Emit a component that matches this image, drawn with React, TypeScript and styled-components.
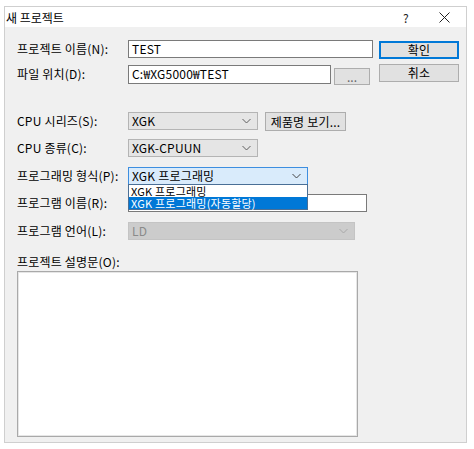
import React from "react";
import styled, { createGlobalStyle } from "styled-components";

const GlobalStyle = createGlobalStyle`
  body {
    margin: 0;
    background: #ffffff;
    font-family: "Noto Sans CJK KR", "Noto Sans", sans-serif;
    font-size: 12px;
    color: #000;
  }
`;

const Window = styled.div`
  margin: 6px 0 0 4px;
  width: 463px;
  height: 437px;
  box-sizing: border-box;
  border: 1px solid #cfcfcf;
  background: #f0f0f0;
  display: flex;
  flex-direction: column;
`;

const TitleBar = styled.div`
  height: 20px;
  background: #fff;
  display: flex;
  align-items: center;
  padding-left: 1px;
  font-size: 12px;
`;

const Title = styled.span`
  flex: 1;
`;

const HelpMark = styled.span`
  width: 14px;
  margin-right: 22px;
  font-size: 12px;
  color: #222;
`;

const CloseBox = styled.span`
  display: flex;
  width: 12px;
  margin-right: 15px;
`;

const Body = styled.div`
  flex: 1;
  padding: 13px 7px 0 12px;
  display: flex;
  flex-direction: column;
  letter-spacing: 0.2px;
`;

const TopSection = styled.div`
  display: flex;
  gap: 6px;
`;

const TopFields = styled.div`
  width: 356px;
  display: flex;
  flex-direction: column;
  gap: 7px;
`;

const ButtonColumn = styled.div`
  width: 80px;
  padding-top: 1px;
  display: flex;
  flex-direction: column;
  gap: 5px;
`;

const Row = styled.div<{ $gap?: number; $h?: number }>`
  position: relative;
  display: flex;
  align-items: flex-start;
  height: ${({ $h }) => $h ?? 18}px;
  margin-top: ${({ $gap }) => $gap ?? 0}px;
`;

const Label = styled.div`
  width: 111px;
  flex-shrink: 0;
  line-height: 18px;
  white-space: nowrap;
`;

const TextBox = styled.div<{ $w: number; $h?: number }>`
  width: ${({ $w }) => $w}px;
  height: ${({ $h }) => $h ?? 18}px;
  box-sizing: border-box;
  background: #fff;
  border: 1px solid #7a7a7a;
  padding-left: 3px;
  line-height: ${({ $h }) => ($h ?? 18) - 3}px;
  white-space: nowrap;
  overflow: hidden;
`;

const Button = styled.div<{ $w?: number; $h?: number; $default?: boolean; $mt?: number; $ml?: number }>`
  width: ${({ $w }) => ($w ? `${$w}px` : "100%")};
  height: ${({ $h }) => $h ?? 18}px;
  margin-top: ${({ $mt }) => $mt ?? 0}px;
  margin-left: ${({ $ml }) => $ml ?? 0}px;
  box-sizing: border-box;
  background: #e1e1e1;
  border: 1px solid ${({ $default }) => ($default ? "#0078d7" : "#adadad")};
  box-shadow: ${({ $default }) => ($default ? "inset 0 0 0 1px #0078d7" : "none")};
  display: flex;
  align-items: center;
  justify-content: center;
  font-size: 12px;
  line-height: 1;
  white-space: nowrap;
`;

const Ellipsis = styled.span`
  color: #666;
  letter-spacing: 0;
`;

type ComboTone = "normal" | "focus" | "disabled";

const ComboBox = styled.div<{ $w: number; $tone?: ComboTone }>`
  width: ${({ $w }) => $w}px;
  height: 18px;
  box-sizing: border-box;
  display: flex;
  align-items: center;
  padding: 0 6px 0 3px;
  background: ${({ $tone }) =>
    $tone === "focus" ? "#d9ebfb" : $tone === "disabled" ? "#cccccc" : "#e5e5e5"};
  border: 1px solid
    ${({ $tone }) =>
      $tone === "focus" ? "#3d8ee0" : $tone === "disabled" ? "#c4c4c4" : "#b4b4b4"};
  color: ${({ $tone }) => ($tone === "disabled" ? "#8a8a8a" : "#000")};
`;

const ComboText = styled.span`
  flex: 1;
  white-space: nowrap;
  line-height: 16px;
`;

const DropList = styled.div`
  position: absolute;
  top: 17px;
  left: 111px;
  width: 180px;
  box-sizing: border-box;
  border: 1px solid #4a6f96;
  background: #fff;
  z-index: 2;
`;

const DropItem = styled.div<{ $selected?: boolean }>`
  height: 12px;
  font-size: 11px;
  line-height: 12px;
  padding-left: 2px;
  white-space: nowrap;
  background: ${({ $selected }) => ($selected ? "#0078d7" : "#fff")};
  color: ${({ $selected }) => ($selected ? "#fff" : "#000")};
`;

const NoteLabel = styled.div`
  margin-top: 14px;
  line-height: 16px;
`;

const NoteArea = styled.div`
  margin-top: 1px;
  width: 341px;
  height: 166px;
  box-sizing: border-box;
  background: #fff;
  border: 1px solid #a9a9a9;
  box-shadow: inset 0 0 0 1px #e6e6e6;
`;

const Chevron: React.FC<{ color?: string }> = ({ color = "#5f5f5f" }) => (
  <svg width="9" height="6" viewBox="0 0 9 6">
    <polyline points="0.5,1 4.5,5 8.5,1" fill="none" stroke={color} strokeWidth="1" />
  </svg>
);

const App: React.FC = () => {
  return (
    <>
      <GlobalStyle />
      <Window>
        <TitleBar>
          <Title>새 프로젝트</Title>
          <HelpMark>?</HelpMark>
          <CloseBox>
            <svg width="11" height="11" viewBox="0 0 11 11">
              <line x1="0.5" y1="0.5" x2="10.5" y2="10.5" stroke="#222" strokeWidth="1" />
              <line x1="10.5" y1="0.5" x2="0.5" y2="10.5" stroke="#222" strokeWidth="1" />
            </svg>
          </CloseBox>
        </TitleBar>
        <Body>
          <TopSection>
            <TopFields>
              <Row>
                <Label>프로젝트 이름(N):</Label>
                <TextBox $w={245}>TEST</TextBox>
              </Row>
              <Row $h={20}>
                <Label>파일 위치(D):</Label>
                <TextBox $w={203} $h={19}>C:₩XG5000₩TEST</TextBox>
                <Button $w={36} $h={17} $mt={3} $ml={3}>
                  <Ellipsis>...</Ellipsis>
                </Button>
              </Row>
            </TopFields>
            <ButtonColumn>
              <Button $default>확인</Button>
              <Button>취소</Button>
            </ButtonColumn>
          </TopSection>

          <Row $gap={27}>
            <Label>CPU 시리즈(S):</Label>
            <ComboBox $w={130}>
              <ComboText>XGK</ComboText>
              <Chevron />
            </ComboBox>
            <Button $w={81} $h={19} $ml={7}>
              제품명 보기...
            </Button>
          </Row>

          <Row $gap={9}>
            <Label>CPU 종류(C):</Label>
            <ComboBox $w={130}>
              <ComboText>XGK-CPUUN</ComboText>
              <Chevron />
            </ComboBox>
          </Row>

          <Row $gap={10}>
            <Label>프로그래밍 형식(P):</Label>
            <ComboBox $w={180} $tone="focus">
              <ComboText>XGK 프로그래밍</ComboText>
              <Chevron color="#444" />
            </ComboBox>
            <DropList>
              <DropItem>XGK 프로그래밍</DropItem>
              <DropItem $selected>XGK 프로그래밍(자동할당)</DropItem>
            </DropList>
          </Row>

          <Row $gap={9}>
            <Label>프로그램 이름(R):</Label>
            <TextBox $w={239} />
          </Row>

          <Row $gap={10}>
            <Label>프로그램 언어(L):</Label>
            <ComboBox $w={227} $tone="disabled">
              <ComboText>LD</ComboText>
              <Chevron color="#a8a8a8" />
            </ComboBox>
          </Row>

          <NoteLabel>프로젝트 설명문(O):</NoteLabel>
          <NoteArea />
        </Body>
      </Window>
    </>
  );
};

export default App;
